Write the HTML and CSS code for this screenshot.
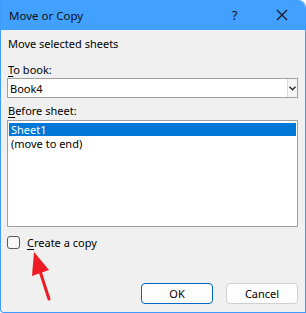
FILE: index.html
```html
<!DOCTYPE html>
<html>
<head>
<meta charset="utf-8">
<link rel="stylesheet" href="styles.css">
</head>
<body>
<div class="window">
  <div class="titlebar">
    <span class="title">Move or Copy</span>
    <span class="help">?</span>
    <svg class="close" width="12" height="12" viewBox="0 0 12 12"><path d="M1 1L11 11M11 1L1 11" stroke="#111" stroke-width="1.1" fill="none"/></svg>
  </div>
  <div class="content">
    <div class="label first">Move selected sheets</div>
    <div class="label"><u>T</u>o book:</div>
    <div class="select">
      <span class="select-text">Book4</span>
      <span class="select-btn"><svg width="7" height="5" viewBox="0 0 7 5"><path d="M0.5 0.8L3.5 3.8L6.5 0.8" stroke="#222" stroke-width="1.3" fill="none"/></svg></span>
    </div>
    <div class="label tight"><u>B</u>efore sheet:</div>
    <div class="listbox">
      <div class="item selected">Sheet1</div>
      <div class="item">(move to end)</div>
    </div>
    <div class="check-row">
      <span class="checkbox"></span>
      <span class="check-label"><u>C</u>reate a copy</span>
    </div>
    <div class="buttons">
      <button class="btn primary">OK</button>
      <button class="btn">Cancel</button>
    </div>
  </div>
  <svg class="arrow" width="60" height="60" viewBox="0 250 60 60">
    <line x1="48" y1="299" x2="38" y2="268" stroke="#ee1c24" stroke-width="3" stroke-linecap="round"/>
    <polygon points="33,252 31,276 48,270" fill="#ee1c24"/>
  </svg>
</div>
</body>
</html>
```
FILE: styles.css
```css
html, body {
  margin: 0;
  padding: 0;
  background: #ffffff;
}
body {
  font-family: "Noto Sans", "Open Sans", sans-serif;
  font-size: 11px;
  color: #000;
}
.window {
  position: relative;
  width: 306px;
  height: 313px;
  box-sizing: border-box;
  border: 1px solid #3f9cff;
  border-top: none;
  border-radius: 0 8px 0 4px;
  background: #f0f0f0;
  display: flex;
  flex-direction: column;
  overflow: hidden;
}
.titlebar {
  height: 30px;
  flex: none;
  background: #42a0ff;
  display: flex;
  align-items: center;
  padding-left: 9px;
  margin: 0 -1px;
}
.title {
  flex: 1;
  font-size: 11.5px;
  color: #111;
}
.help {
  width: 12px;
  margin-right: 32px;
  font-size: 12.5px;
  color: #111;
}
.close {
  margin-right: 18px;
}
.content {
  padding: 0 7px 0 6px;
  display: flex;
  flex-direction: column;
}
.label {
  line-height: 16px;
  height: 16px;
  margin-top: 10px;
  padding-left: 1px;
}
.label.first {
  margin-top: 6px;
}
.label.tight {
  margin-top: 5px;
}
.label u, .check-label u {
  text-decoration-thickness: 1px;
  text-underline-offset: 2px;
}
.select {
  height: 20px;
  box-sizing: border-box;
  border: 1px solid #a0a0a0;
  background: #fff;
  display: flex;
  align-items: center;
}
.select-text {
  flex: 1;
  padding-left: 2px;
}
.select-btn {
  width: 9px;
  height: 18px;
  border-left: 1px solid #dcdcdc;
  background: #f6f6f6;
  display: flex;
  align-items: center;
  justify-content: center;
}
.listbox {
  margin-top: 1px;
  height: 107px;
  box-sizing: border-box;
  border: 1px solid #a0a0a0;
  background: #fff;
  padding: 2px 1px;
}
.item {
  height: 13px;
  line-height: 13px;
  padding-left: 2px;
}
.item + .item {
  margin-top: 1px;
}
.item.selected {
  background: #0078d7;
  color: #fff;
}
.check-row {
  margin-top: 9px;
  display: flex;
  align-items: center;
  height: 13px;
}
.checkbox {
  width: 11px;
  height: 11px;
  border: 1px solid #5a5a5a;
  border-radius: 3px;
  background: #f7f7f7;
  margin-right: 7px;
}
.buttons {
  margin-top: 34px;
  display: flex;
  justify-content: flex-end;
  gap: 13px;
}
.btn {
  width: 72px;
  height: 21px;
  box-sizing: border-box;
  border: 1px solid #d0d0d0;
  border-radius: 4px;
  background: #fdfdfd;
  font-family: "Noto Sans", "Open Sans", sans-serif;
  font-size: 11px;
  color: #000;
  padding: 0;
}
.btn.primary {
  border-color: #0067c0;
}
.arrow {
  position: absolute;
  left: 0;
  top: 250px;
}
```
